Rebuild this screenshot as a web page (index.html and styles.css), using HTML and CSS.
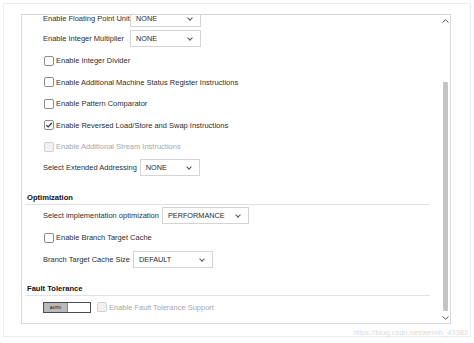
FILE: index.html
```html
<!DOCTYPE html>
<html>
<head>
<meta charset="utf-8">
<link rel="stylesheet" href="styles.css">
</head>
<body>
<div class="frame">
  <div class="panel">
    <div class="content">
      <div class="inner">
        <div class="row sel">
          <span class="label fixed">Enable Floating Point Unit</span>
          <span class="select w71">NONE<i class="chev"></i></span>
        </div>
        <div class="row sel">
          <span class="label fixed">Enable Integer Multiplier</span>
          <span class="select w71">NONE<i class="chev"></i></span>
        </div>
        <div class="row chk first">
          <span class="box"></span><span class="label">Enable Integer Divider</span>
        </div>
        <div class="row chk">
          <span class="box"></span><span class="label">Enable Additional Machine Status Register Instructions</span>
        </div>
        <div class="row chk">
          <span class="box"></span><span class="label">Enable Pattern Comparator</span>
        </div>
        <div class="row chk">
          <span class="box checked"><svg viewBox="0 0 10 10" width="10" height="10"><path d="M2.3 5.2 L4.2 7 L7.8 3" fill="none" stroke="#333" stroke-width="1.2"/></svg></span><span class="label">Enable Reversed Load/Store and Swap Instructions</span>
        </div>
        <div class="row chk disabled">
          <span class="box"></span><span class="label">Enable Additional Stream Instructions</span>
        </div>
        <div class="row chk">
          <span class="label">Select Extended Addressing</span>
          <span class="select w60">NONE<i class="chev"></i></span>
        </div>

        <div class="section">Optimization</div>
        <div class="row opt">
          <span class="label">Select implementation optimization</span>
          <span class="select w87">PERFORMANCE<i class="chev"></i></span>
        </div>
        <div class="row chk">
          <span class="box"></span><span class="label">Enable Branch Target Cache</span>
        </div>
        <div class="row chk">
          <span class="label">Branch Target Cache Size</span>
          <span class="select w80">DEFAULT<i class="chev"></i></span>
        </div>

        <div class="section">Fault Tolerance</div>
        <div class="row opt">
          <span class="toggle"><span class="knob">AUTO</span></span>
          <span class="box dis"></span><span class="label gray">Enable Fault Tolerance Support</span>
        </div>
      </div>
    </div>
    <div class="scrollbar">
      <svg class="arrow" viewBox="0 0 7 4" width="7" height="4"><path d="M0.5 3.5 L3.5 0.8 L6.5 3.5" fill="none" stroke="#555" stroke-width="1"/></svg>
      <div class="track"><div class="thumb"></div></div>
      <svg class="arrow" viewBox="0 0 7 4" width="7" height="4"><path d="M0.5 0.5 L3.5 3.2 L6.5 0.5" fill="none" stroke="#555" stroke-width="1"/></svg>
    </div>
  </div>
  <div class="mark">https://blog.csdn.net/weixin_43383</div>
</div>
</body>
</html>
```
FILE: styles.css
```css
html, body {
  margin: 0;
  padding: 0;
  background: #fff;
}
body {
  font-family: "Liberation Sans", Arial, sans-serif;
  font-size: 7.5px;
  color: #2e2e2e;
}
.frame {
  margin: 3px 3px 0 3px;
  height: 334px;
  border: 1px solid #ededed;
  padding: 10px 19px 0 17px;
  box-sizing: border-box;
  width: 468px;
}
.panel {
  width: 430px;
  height: 310px;
  border: 1px solid #d8d8d8;
  box-sizing: border-box;
  display: flex;
  overflow: hidden;
}
.content {
  flex: 1;
  overflow: hidden;
}
.inner {
  margin-top: -7px;
  margin-right: 9px;
}
.row {
  display: flex;
  align-items: center;
  padding-left: 21px;
}
.row.sel { height: 20px; }
.row.chk { height: 21.4px; }
.row.chk.first { margin-top: 2.3px; }
.row.opt { height: 22px; }
.row .box { margin-left: 1px; }
.label {
  white-space: nowrap;
}
.label.fixed { width: 87px; }
.select {
  position: relative;
  height: 17px;
  box-sizing: border-box;
  border: 1px solid #d4d4d4;
  background: #fff;
  display: flex;
  align-items: center;
  padding-left: 5px;
  margin-left: 3px;
  font-size: 7.3px;
  color: #2a2a2a;
}
.row.sel .select { margin-left: 0; }
.w71 { width: 71px; }
.w60 { width: 60px; }
.w87 { width: 87px; }
.w80 { width: 80px; }
.chev {
  position: absolute;
  right: 8px;
  top: 5px;
  width: 3px;
  height: 3px;
  border-right: 1px solid #555;
  border-bottom: 1px solid #555;
  transform: rotate(45deg);
}
.box {
  width: 10px;
  height: 10px;
  box-sizing: border-box;
  border: 1px solid #8c8c8c;
  border-radius: 2px;
  background: #fff;
  margin-right: 2px;
  flex: none;
  display: flex;
}
.box svg { margin: -1px; }
.disabled .box, .box.dis {
  border-color: #d2d2d2;
  background: #f1f1f1;
}
.disabled .label, .gray { color: #a8a8a8; }
.section {
  margin-top: 13.3px;
  margin-left: 3px;
  padding-left: 2px;
  height: 12px;
  line-height: 12px;
  font-weight: bold;
  font-size: 7.6px;
  color: #111;
  border-bottom: 1px solid #e2e2e2;
}
.toggle {
  width: 48px;
  height: 11px;
  box-sizing: border-box;
  border: 1px solid #4a4a4a;
  background: #fff;
  display: flex;
  margin-right: 5px;
}
.knob {
  width: 23px;
  background: #b9b9b9;
  font-size: 4px;
  font-weight: bold;
  color: #333;
  display: flex;
  align-items: center;
  justify-content: center;
  border-right: 1px solid #888;
}
.scrollbar {
  width: 11px;
  flex: none;
  display: flex;
  flex-direction: column;
  align-items: center;
  padding: 4px 0 3px;
  box-sizing: border-box;
}
.arrow { flex: none; margin-left: 1px; }
.track {
  flex: 1;
  width: 100%;
  display: flex;
  flex-direction: column;
  align-items: center;
  padding: 59px 0 5px;
  box-sizing: border-box;
}
.thumb {
  flex: 1;
  width: 5px;
  margin-left: 1px;
  background: #c3c3c3;
  border-radius: 1px;
}
.mark {
  text-align: right;
  font-size: 7.5px;
  color: #dcdcdc;
  margin-top: 4px;
  margin-right: -17px;
}
```
